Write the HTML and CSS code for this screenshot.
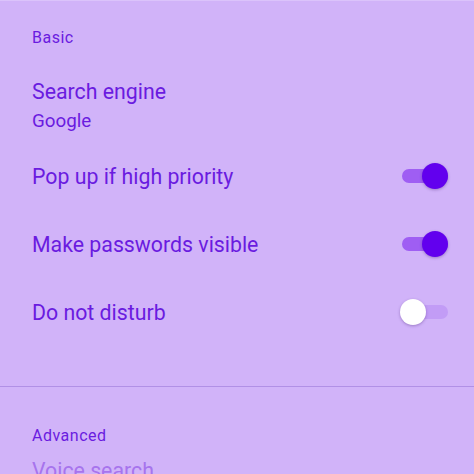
FILE: index.html
```html
<!DOCTYPE html>
<html>
<head>
<meta charset="utf-8">
<link rel="stylesheet" href="styles.css">
</head>
<body>
<div class="screen">
  <div class="category first">Basic</div>
  <div class="pref two-line">
    <div class="title">Search engine</div>
    <div class="summary">Google</div>
  </div>
  <div class="pref switch-row">
    <div class="title">Pop up if high priority</div>
    <div class="switch on"><span class="track"></span><span class="thumb"></span></div>
  </div>
  <div class="pref switch-row">
    <div class="title">Make passwords visible</div>
    <div class="switch on"><span class="track"></span><span class="thumb"></span></div>
  </div>
  <div class="pref switch-row">
    <div class="title">Do not disturb</div>
    <div class="switch"><span class="track"></span><span class="thumb"></span></div>
  </div>
  <div class="divider"></div>
  <div class="category">Advanced</div>
  <div class="pref disabled">
    <div class="title">Voice search</div>
  </div>
</div>
</body>
</html>
```

FILE: styles.css
```css
html, body {
  margin: 0;
  padding: 0;
  background: #d1b3f9;
}
body {
  font-family: Roboto, "Noto Sans", sans-serif;
  color: #6a1be0;
  overflow: hidden;
}
.screen {
  width: 474px;
  height: 474px;
  border-top: 1px solid #dbc3fb;
  box-sizing: border-box;
  overflow: hidden;
}
.category {
  font-size: 16px;
  line-height: 20px;
  padding: 39px 32px 0;
  height: 20px;
  letter-spacing: 0.5px;
  font-weight: 400;
}
.category.first {
  padding-top: 27px;
  height: 30px;
}
.pref {
  padding: 0 26px 0 32px;
}
.title {
  font-size: 21.3px;
  line-height: 28px;
}
.two-line {
  padding-top: 20px;
  height: 65px;
}
.summary {
  font-size: 18.8px;
  line-height: 26px;
  margin-top: 2px;
}
.switch-row {
  height: 68px;
  display: flex;
  align-items: center;
  justify-content: space-between;
}
.switch {
  position: relative;
  width: 48px;
  height: 26px;
  margin-top: -3px;
}
.track {
  position: absolute;
  left: 2px;
  right: 0;
  top: 6px;
  height: 14px;
  border-radius: 7px;
  background: #c29cf6;
}
.thumb {
  position: absolute;
  top: 0;
  left: 0;
  width: 26px;
  height: 26px;
  border-radius: 50%;
  background: #ffffff;
  box-shadow: 0 1px 3px rgba(60, 20, 110, 0.35);
}
.switch.on .track {
  background: #9f5ef3;
}
.switch.on .thumb {
  left: auto;
  right: 0;
  background: #6200ee;
}
.divider {
  margin-top: 39px;
  height: 1px;
  background: #b190e6;
}
.disabled {
  padding-top: 11px;
  color: #a774ed;
}
```
